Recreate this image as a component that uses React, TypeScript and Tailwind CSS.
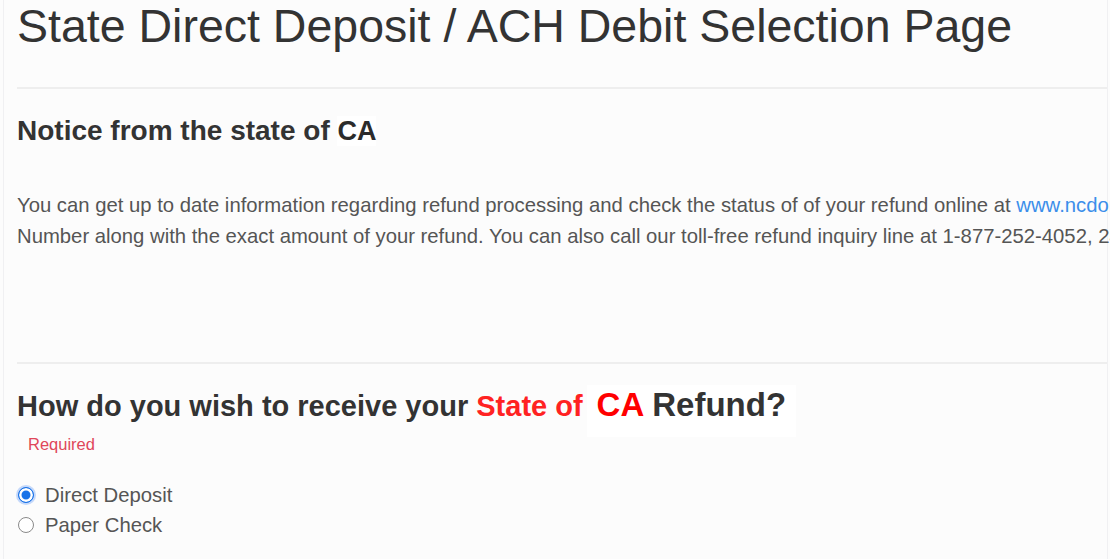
import { useState } from "react";

const radioClass =
  "ml-[1px] h-[16px] w-[16px] shrink-0 appearance-none rounded-full border border-[#8a8a8a] bg-white checked:border-[#1a73e8] checked:bg-[#1a73e8] checked:shadow-[inset_0_0_0_2.5px_#fff,0_0_0_2px_rgba(66,133,244,0.3)]";

export default function App() {
  const [method, setMethod] = useState("direct");

  return (
    <div className="min-h-[559px] w-[1110px] overflow-hidden bg-[#fcfcfc] font-['Liberation_Sans',Arial,sans-serif]">
      <div className="ml-[3px] mr-[2px] min-h-[559px] border-x border-[#f0f0f2] pl-[13px]">
        <h1 className="text-[46.5px] leading-[52px] whitespace-nowrap text-[#333]">
          State Direct Deposit / ACH Debit Selection Page
        </h1>
        <hr className="mt-[35px] border-t-2 border-[#eeeeee]" />

        {/* Notice */}
        <h2 className="mt-[25px] text-[28px] font-bold leading-[34px] whitespace-nowrap text-[#333]">
          Notice from the state of <span className="bg-white text-[27px] text-[#2b2b2b]">CA</span>
        </h2>
        <div className="mt-[42px] h-[172px] whitespace-nowrap text-[20.3px] leading-[31px] text-[#555]">
          <p>
            You can get up to date information regarding refund processing and check the status of of your refund online at{" "}
            <a href="#" className="text-[#3b8eea]">www.ncdor.gov</a> using your Social Security
          </p>
          <p>
            Number along with the exact amount of your refund. You can also call our toll-free refund inquiry line at 1-877-252-4052, 24 hours a day, 7 days a week.
          </p>
        </div>
        <hr className="border-t-2 border-[#eeeeee]" />

        {/* Refund method */}
        <h2 className="mt-[21px] flex items-baseline whitespace-nowrap font-bold text-[#333]">
          <span className="text-[29px] leading-[40px]">
            How do you wish to receive your <span className="text-[#f22]">State of</span>
          </span>
          <span className="ml-[4px] bg-white px-[10px] pb-[12px] text-[33px] leading-[40px] text-[#333]">
            <span className="text-[#ff0000]">CA</span> Refund?
          </span>
        </h2>
        <p className="ml-[11px] -mt-[2px] text-[16.5px] leading-[18px] text-[#e0475a]">Required</p>

        <div className="mt-[27px] flex flex-col text-[20.3px] leading-[30px] text-[#555]">
          <label className="flex items-center gap-[11px]">
            <input
              type="radio"
              name="method"
              checked={method === "direct"}
              onChange={() => setMethod("direct")}
              className={radioClass}
            />
            Direct Deposit
          </label>
          <label className="flex items-center gap-[11px]">
            <input
              type="radio"
              name="method"
              checked={method === "check"}
              onChange={() => setMethod("check")}
              className={radioClass}
            />
            Paper Check
          </label>
        </div>
      </div>
    </div>
  );
}
